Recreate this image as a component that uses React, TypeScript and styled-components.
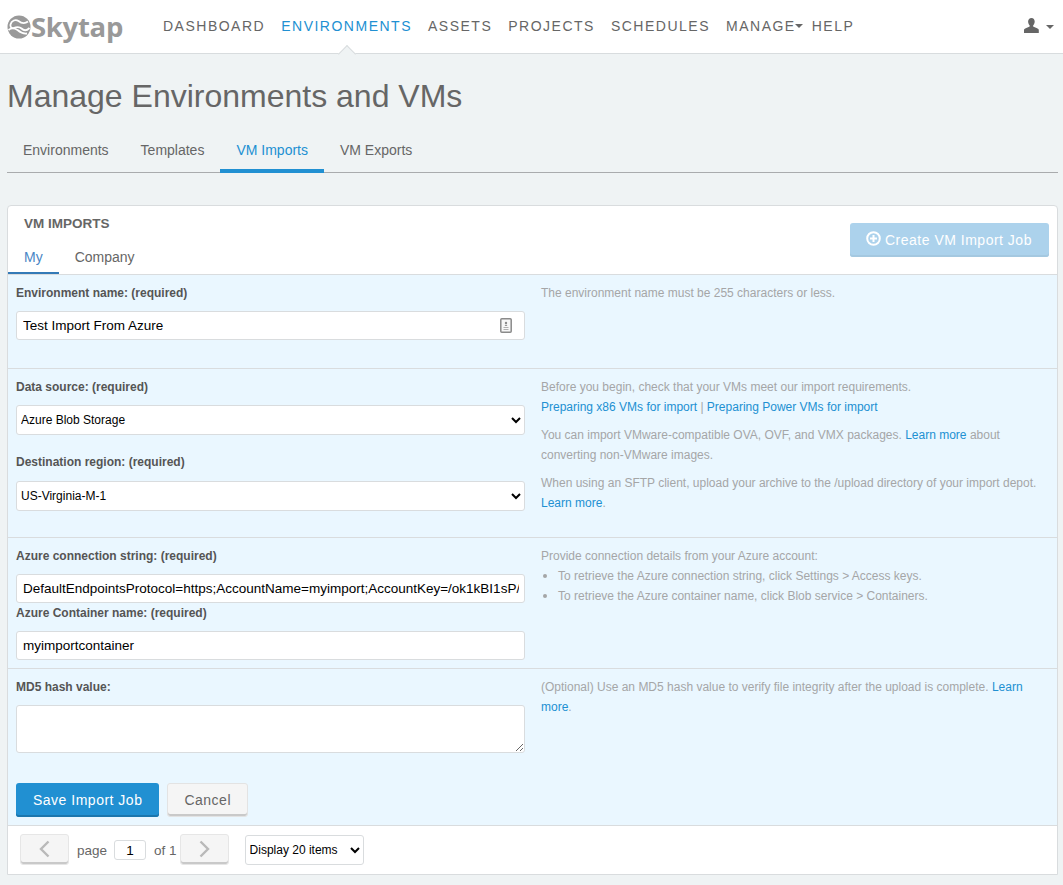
import React from "react";
import styled, { createGlobalStyle } from "styled-components";

const Global = createGlobalStyle`
  html, body { margin: 0; padding: 0; background: #eff3f4; }
  body { font-family: "Liberation Sans", Arial, sans-serif; color: #666; }
  * { box-sizing: border-box; }
`;

const Page = styled.div`
  width: 1063px;
  height: 885px;
  overflow: hidden;
`;

const TopBar = styled.header`
  height: 54px;
  background: #fff;
  border-bottom: 1px solid #d8dcde;
  display: flex;
  align-items: center;
  position: relative;
`;

const Logo = styled.div`
  width: 163px;
  padding-left: 7px;
  display: flex;
  align-items: center;
  height: 100%;
`;

const LogoWord = styled.span`
  font-family: "Open Sans", sans-serif;
  font-weight: 700;
  font-size: 27.5px;
  letter-spacing: -0.3px;
  line-height: 50px;
  color: #999;
`;

const MainNav = styled.nav`
  display: flex;
  align-items: center;
  gap: 16px;
  flex: 1;
`;

const NavItem = styled.a<{ $active?: boolean }>`
  position: relative;
  font-size: 14px;
  letter-spacing: 1.5px;
  color: ${(p) => (p.$active ? "#2190d2" : "#666")};
  line-height: 16px;
  margin-top: -1px;
  display: inline-flex;
  align-items: center;
`;

const NavPointer = styled.span`
  position: absolute;
  left: 50%;
  top: 29px;
  margin-left: -7px;
  width: 14px;
  height: 14px;
  background: #eff3f4;
  border-left: 1px solid #d8dcde;
  border-top: 1px solid #d8dcde;
  transform: rotate(45deg) scale(0.9);
`;

const NavCaret = styled.span`
  width: 0;
  height: 0;
  border-left: 4px solid transparent;
  border-right: 4px solid transparent;
  border-top: 4px solid #666;
  margin-left: -1px;
  margin-right: -7px;
`;

const UserCaret = styled(NavCaret)`
  margin: 3px 0 0 0;
`;

const UserMenu = styled.div`
  display: flex;
  align-items: center;
  gap: 7px;
  padding-right: 9px;
  margin-top: -3px;
`;

const Title = styled.h1`
  margin: 0;
  padding: 23px 0 0 7px;
  font-size: 32px;
  font-weight: 400;
  line-height: 38px;
  color: #666;
`;

const PageTabs = styled.div`
  margin: 15px 5px 0 7px;
  height: 43px;
  display: flex;
  border-bottom: 1px solid #a9abad;
`;

const PageTab = styled.a<{ $active?: boolean }>`
  padding: 12px 16px 0;
  height: 43px;
  font-size: 14px;
  line-height: 16px;
  color: ${(p) => (p.$active ? "#2190d2" : "#666")};
  border-bottom: 4px solid ${(p) => (p.$active ? "#2190d2" : "transparent")};
`;

const Panel = styled.section`
  margin: 32px 5px 0 7px;
  height: 670px;
  background: #fff;
  border: 1px solid #d9dcde;
  border-radius: 4px 4px 0 0;
  display: flex;
  flex-direction: column;
`;

const PanelHead = styled.div`
  height: 69px;
  display: flex;
  justify-content: space-between;
  border-bottom: 1px solid #d9dcde;
`;

const PanelTitleBlock = styled.div`
  display: flex;
  flex-direction: column;
  justify-content: space-between;
`;

const PanelTitle = styled.h2`
  margin: 0;
  padding: 11px 0 0 16px;
  font-size: 13.5px;
  line-height: 14px;
  font-weight: 700;
  color: #666;
`;

const SubTabs = styled.div`
  display: flex;
`;

const SubTab = styled.a<{ $active?: boolean }>`
  height: 32px;
  padding: 7px 16px 0;
  font-size: 14px;
  line-height: 16px;
  color: ${(p) => (p.$active ? "#4a86c5" : "#666")};
  border-bottom: 2px solid ${(p) => (p.$active ? "#337ab7" : "transparent")};
`;

const Button = styled.button<{ $tone?: "primary" | "default" | "faded" }>`
  height: 34px;
  border-radius: 3px;
  border: 0;
  padding: 0 17px;
  font-family: "Liberation Sans", Arial, sans-serif;
  font-size: 14px;
  letter-spacing: 0.5px;
  display: inline-flex;
  align-items: center;
  ${(p) =>
    p.$tone === "primary"
      ? "background:#2190d2;color:#fff;box-shadow:inset 0 -2px 0 #1b76ad;"
      : p.$tone === "faded"
      ? "background:#acd2ec;color:#fff;box-shadow:inset 0 -2px 0 #a4c8e0;"
      : "background:#f5f5f5;color:#666;border:1px solid #e3e3e3;box-shadow:inset 0 -2px 0 #c9c9c9;padding:0 16px;"}
`;

const CreateButton = styled(Button)`
  margin: 17px 8px 0 0;
  width: 199px;
  padding: 0 16px;
  gap: 4px;
  white-space: nowrap;
`;

const Form = styled.div`
  flex: 1;
  background: #eaf7ff;
  display: flex;
  flex-direction: column;
`;

const Row = styled.div<{ $h: number; $last?: boolean }>`
  height: ${(p) => p.$h}px;
  padding: 11px 8px 0;
  display: grid;
  grid-template-columns: 509px 1fr;
  column-gap: 16px;
  border-bottom: ${(p) => (p.$last ? "0" : "1px solid #d9dcde")};
`;

const Field = styled.div`
  display: flex;
  flex-direction: column;
`;

const Label = styled.label<{ $gap?: number; $top?: number }>`
  font-size: 12px;
  line-height: 14px;
  font-weight: 700;
  color: #555;
  margin-top: ${(p) => p.$top ?? 0}px;
  margin-bottom: ${(p) => p.$gap ?? 12}px;
`;

const InputWrap = styled.div`
  position: relative;
  height: 29px;
`;

const TextInput = styled.input`
  width: 100%;
  height: 29px;
  padding: 0 5px 0 6px;
  border: 1px solid #d9dcde;
  border-radius: 3px;
  background: #fff;
  font-family: "Liberation Sans", Arial, sans-serif;
  font-size: 13.5px;
  color: #000;
  outline: none;
`;

const Badge = styled.span`
  position: absolute;
  right: 13px;
  top: 7px;
  display: flex;
`;

const Select = styled.select`
  width: 100%;
  height: 30px;
  padding: 0;
  border: 1px solid #d9dcde;
  border-radius: 3px;
  background: #fff;
  font-family: "Liberation Sans", Arial, sans-serif;
  font-size: 12px;
  color: #000;
  outline: none;
`;

const TextArea = styled.textarea`
  width: 100%;
  height: 48px;
  display: block;
  border: 1px solid #d9dcde;
  border-radius: 3px;
  background: #fff;
  outline: none;
`;

const Help = styled.div`
  font-size: 12px;
  line-height: 20px;
  color: #a5a6a7;
  margin-top: -3px;
`;

const HelpPara = styled.p`
  margin: 0 0 8px;
`;

const HelpLink = styled.a`
  color: #2190d2;
`;

const HelpList = styled.ul`
  margin: 0;
  padding: 0 0 0 17px;
  list-style: none;
`;

const HelpItem = styled.li`
  position: relative;
  &::before {
    content: "";
    position: absolute;
    left: -15px;
    top: 8px;
    width: 4px;
    height: 4px;
    border-radius: 50%;
    background: #a5a6a7;
  }
`;

const Actions = styled.div`
  display: flex;
  gap: 8px;
  margin-top: 30px;
`;

const Pager = styled.footer`
  height: 49px;
  border-top: 1px solid #d9dcde;
  padding-left: 12px;
  display: flex;
  align-items: center;
  font-size: 13.5px;
  color: #666;
`;

const PagerButton = styled.button`
  width: 49px;
  height: 31px;
  margin-top: -1px;
  background: #f5f5f5;
  border: 1px solid #e6e6e6;
  border-radius: 3px;
  box-shadow: inset 0 -2px 0 #c9c9c9;
  display: inline-flex;
  align-items: center;
  justify-content: center;
  padding: 0 0 2px;
`;

const PageWord = styled.span<{ $l: number; $r: number }>`
  margin-left: ${(p) => p.$l}px;
  margin-right: ${(p) => p.$r}px;
`;

const PageInput = styled.input`
  width: 32px;
  height: 20px;
  text-align: center;
  border: 1px solid #d9dcde;
  border-radius: 3px;
  font-family: "Liberation Sans", Arial, sans-serif;
  font-size: 13.5px;
  color: #000;
  padding: 0;
  outline: none;
`;

const PageSize = styled.select`
  margin-left: 16px;
  width: 119px;
  height: 30px;
  border: 1px solid #d9dcde;
  border-radius: 3px;
  background: #fff;
  font-family: "Liberation Sans", Arial, sans-serif;
  font-size: 12px;
  color: #000;
  outline: none;
`;

const PlusSvg = styled.svg`
  margin-top: -3px;
`;

const Chevron = ({ left }: { left?: boolean }) => (
  <svg width="13" height="18" viewBox="0 0 13 18" fill="none">
    <path d={left ? "M10.5 1.5 3 9l7.5 7.5" : "M2.5 1.5 10 9l-7.5 7.5"} stroke="#b9b9b9" strokeWidth="2.4" />
  </svg>
);

const SwirlLogo = () => (
  <svg width="24" height="24" viewBox="0 0 24 24" fill="none">
    <circle cx="12" cy="12" r="11.5" fill="#999" />
    <path d="M21 6.500C17 9.500 14 8 11.500 6 8.500 4 4.500 5.500 3.500 9.500c-.5 2.500 1 4 3 3.500C9 12 12 11 14.500 13.500c2 2 5 2.500 8-.5" stroke="#fff" strokeWidth="1.800" />
    <path d="M1.500 15c3-2.500 6-2 9 0 3 2.500 6.500 4 9.500 3.500" stroke="#fff" strokeWidth="1.800" />
  </svg>
);

const UserIcon = () => (
  <svg width="15" height="15" viewBox="0 0 15 15">
    <path fill="#666" d="M7.500 0c2 0 3.200 1.500 3.200 3.600 0 1.500-.6 2.800-1.400 3.700-.4.500-.3 1.200.3 1.500l3.500 1.500c1.100.5 1.700 1 1.700 2V15H0v-2.700c0-1 .6-1.500 1.700-2l3.500-1.500c.6-.3.700-1 .3-1.500-.8-.9-1.400-2.200-1.400-3.700C4.100 1.500 5.500 0 7.500 0Z" />
  </svg>
);

const ContactIcon = () => (
  <svg width="12" height="15" viewBox="0 0 12 15" fill="none">
    <rect x="0.8" y="0.8" width="10.4" height="13.400" rx="1" stroke="#8a8a8a" strokeWidth="1.500" fill="#f7f7f7" />
    <circle cx="6" cy="5" r="1.200" fill="#8a8a8a" />
    <path d="M4.500 8 6 6.500 7.500 8z" fill="#8a8a8a" />
    <path d="M3.500 9h5v1h-5zM3.500 11h5v1h-5z" fill="#b0b0b0" />
  </svg>
);

const PlusCircle = () => (
  <PlusSvg width="15" height="15" viewBox="0 0 15 15">
    <circle cx="7.5" cy="7.5" r="6.3" fill="none" stroke="#fff" strokeWidth="2" />
    <path d="M7.500 4v7M4 7.500h7" stroke="#fff" strokeWidth="2" />
  </PlusSvg>
);

export default function App() {
  return (
    <Page>
      <Global />
      <TopBar>
        <Logo>
          <SwirlLogo />
          <LogoWord>Skytap</LogoWord>
        </Logo>
        <MainNav>
          <NavItem>DASHBOARD</NavItem>
          <NavItem $active>
            ENVIRONMENTS
            <NavPointer />
          </NavItem>
          <NavItem>ASSETS</NavItem>
          <NavItem>PROJECTS</NavItem>
          <NavItem>SCHEDULES</NavItem>
          <NavItem>
            MANAGE
            <NavCaret />
          </NavItem>
          <NavItem>HELP</NavItem>
        </MainNav>
        <UserMenu>
          <UserIcon />
          <UserCaret />
        </UserMenu>
      </TopBar>

      <Title>Manage Environments and VMs</Title>

      <PageTabs>
        <PageTab>Environments</PageTab>
        <PageTab>Templates</PageTab>
        <PageTab $active>VM Imports</PageTab>
        <PageTab>VM Exports</PageTab>
      </PageTabs>

      <Panel>
        <PanelHead>
          <PanelTitleBlock>
            <PanelTitle>VM IMPORTS</PanelTitle>
            <SubTabs>
              <SubTab $active>My</SubTab>
              <SubTab>Company</SubTab>
            </SubTabs>
          </PanelTitleBlock>
          <CreateButton $tone="faded">
            <PlusCircle />
            Create VM Import Job
          </CreateButton>
        </PanelHead>

        <Form>
          <Row $h={94}>
            <Field>
              <Label $gap={11}>Environment name: (required)</Label>
              <InputWrap>
                <TextInput defaultValue="Test Import From Azure" />
                <Badge>
                  <ContactIcon />
                </Badge>
              </InputWrap>
            </Field>
            <Help>The environment name must be 255 characters or less.</Help>
          </Row>

          <Row $h={169}>
            <Field>
              <Label $gap={11}>Data source: (required)</Label>
              <Select defaultValue="azure">
                <option value="azure">Azure Blob Storage</option>
              </Select>
              <Label $top={20} $gap={12}>Destination region: (required)</Label>
              <Select defaultValue="va">
                <option value="va">US-Virginia-M-1</option>
              </Select>
            </Field>
            <Help>
              <HelpPara>
                Before you begin, check that your VMs meet our import requirements.
                <br />
                <HelpLink>Preparing x86 VMs for import</HelpLink> | <HelpLink>Preparing Power VMs for import</HelpLink>
              </HelpPara>
              <HelpPara>
                You can import VMware-compatible OVA, OVF, and VMX packages. <HelpLink>Learn more</HelpLink> about
                converting non-VMware images.
              </HelpPara>
              <HelpPara>
                When using an SFTP client, upload your archive to the /upload directory of your import depot.{" "}
                <HelpLink>Learn more</HelpLink>.
              </HelpPara>
            </Help>
          </Row>

          <Row $h={131}>
            <Field>
              <Label $gap={11}>Azure connection string: (required)</Label>
              <TextInput defaultValue="DefaultEndpointsProtocol=https;AccountName=myimport;AccountKey=/ok1kBI1sP/gL7kxYz" />
              <Label $top={3} $gap={11}>Azure Container name: (required)</Label>
              <TextInput defaultValue="myimportcontainer" />
            </Field>
            <Help>
              Provide connection details from your Azure account:
              <HelpList>
                <HelpItem>To retrieve the Azure connection string, click Settings &gt; Access keys.</HelpItem>
                <HelpItem>To retrieve the Azure container name, click Blob service &gt; Containers.</HelpItem>
              </HelpList>
            </Help>
          </Row>

          <Row $h={156} $last>
            <Field>
              <Label $gap={11}>MD5 hash value:</Label>
              <TextArea />
              <Actions>
                <Button $tone="primary">Save Import Job</Button>
                <Button>Cancel</Button>
              </Actions>
            </Field>
            <Help>
              (Optional) Use an MD5 hash value to verify file integrity after the upload is complete.{" "}
              <HelpLink>Learn more</HelpLink>.
            </Help>
          </Row>
        </Form>

        <Pager>
          <PagerButton>
            <Chevron left />
          </PagerButton>
          <PageWord $l={8} $r={7}>page</PageWord>
          <PageInput defaultValue="1" />
          <PageWord $l={8} $r={3}>of 1</PageWord>
          <PagerButton>
            <Chevron />
          </PagerButton>
          <PageSize defaultValue="20">
            <option value="20">Display 20 items</option>
          </PageSize>
        </Pager>
      </Panel>
    </Page>
  );
}
